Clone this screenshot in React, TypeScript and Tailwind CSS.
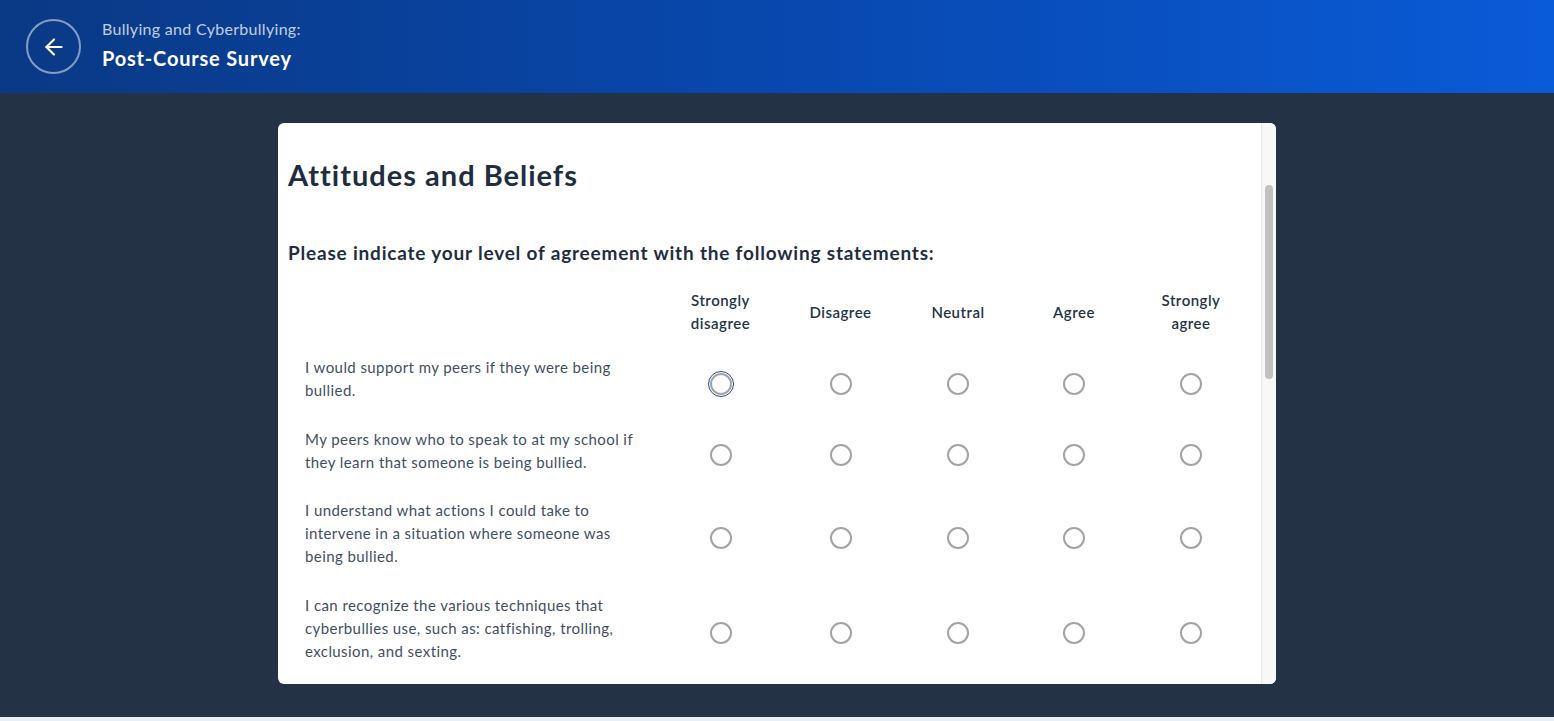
import { useState } from 'react';

const options = ['Strongly disagree', 'Disagree', 'Neutral', 'Agree', 'Strongly agree'];

const statements = [
  ['I would support my peers if they were being', 'bullied.'],
  ['My peers know who to speak to at my school if', 'they learn that someone is being bullied.'],
  ['I understand what actions I could take to', 'intervene in a situation where someone was', 'being bullied.'],
  ['I can recognize the various techniques that', 'cyberbullies use, such as: catfishing, trolling,', 'exclusion, and sexting.'],
];

function HeaderLabel({ label }: { label: string }) {
  const parts = label.startsWith('Strongly') ? ['Strongly', label.split(' ')[1]] : [label];
  return (
    <div className="flex flex-col items-center justify-center text-[15px] font-semibold leading-[23px] tracking-[0.5px] text-[#243447]">
      {parts.map((p) => (
        <span key={p}>{p}</span>
      ))}
    </div>
  );
}

export default function App() {
  const [answers, setAnswers] = useState<Record<number, number>>({});

  return (
    <div className="min-h-screen bg-[#e9eff6] font-['Lato','Noto_Sans',sans-serif]">
      <div className="flex h-[717px] flex-col bg-[#233244]">
        {/* Top bar */}
        <header className="flex h-[93px] shrink-0 items-center bg-gradient-to-r from-[#0a3985] via-[#0848ae] to-[#0a5bd8] pl-[26px]">
          <button className="flex h-[55px] w-[55px] items-center justify-center rounded-full border-2 border-white/50 text-white">
            <svg width="26" height="26" viewBox="0 0 24 24" fill="none" stroke="currentColor" strokeWidth="2" strokeLinecap="round" strokeLinejoin="round">
              <path d="M19 12H5" />
              <path d="M12 19l-7-7 7-7" />
            </svg>
          </button>
          <div className="ml-[21px] mb-[6px] flex flex-col">
            <span className="text-[16px] leading-[24px] tracking-[0.3px] text-white/75">Bullying and Cyberbullying:</span>
            <span className="mt-[4px] text-[20px] font-bold leading-[26px] tracking-[0.8px] text-white">Post-Course Survey</span>
          </div>
        </header>

        {/* Survey card */}
        <main className="flex flex-1 justify-center pt-[30px]">
          <div className="flex h-[561px] w-[998px] overflow-hidden rounded-[6px] bg-white">
            <div className="flex-1 pl-[10px]">
              <h1 className="mt-[34px] text-[29px] font-bold leading-[36px] tracking-[1px] text-[#1f2e3f]">Attitudes and Beliefs</h1>
              <h2 className="mt-[47px] text-[19px] font-bold leading-[26px] tracking-[0.8px] text-[#1f2e3f]">
                Please indicate your level of agreement with the following statements:
              </h2>

              <div className="mt-[23px] grid grid-cols-[372px_121px_119px_116px_116px_118px]">
                <div className="h-[46px]" />
                {options.map((o) => (
                  <HeaderLabel key={o} label={o} />
                ))}

                {statements.map((lines, r) => (
                  <div key={r} className="contents">
                    <div className={`pl-[17px] text-[15px] leading-[23px] tracking-[0.42px] text-[#3f4f63] ${r === 0 ? 'pt-[21px]' : 'pt-[25.5px]'}`}>
                      {lines.map((l) => (
                        <div key={l} className="whitespace-nowrap">{l}</div>
                      ))}
                    </div>
                    {options.map((o, c) => {
                      const checked = answers[r] === c;
                      const focused = r === 0 && c === 0;
                      return (
                        <div key={o} className={`flex items-center justify-center ${r === 0 ? 'pt-[30px]' : 'pt-[34.5px]'}`}>
                          <button
                            onClick={() => setAnswers({ ...answers, [r]: c })}
                            className={`flex h-[22px] w-[22px] items-center justify-center rounded-full border-2 border-[#a3a3a3] ${
                              focused ? 'outline outline-1 outline-offset-[1px] outline-[#1d4fa3]' : ''
                            }`}
                          >
                            {checked && <span className="h-[10px] w-[10px] rounded-full bg-[#1d4fa3]" />}
                          </button>
                        </div>
                      );
                    })}
                  </div>
                ))}
              </div>
            </div>

            {/* Scrollbar */}
            <div className="w-[15px] shrink-0 border-l border-[#e6e6e6] bg-[#f8f8f8] pt-[62px] pl-[3px]">
              <div className="h-[194px] w-[8px] rounded-full bg-[#c1c1c1]" />
            </div>
          </div>
        </main>
      </div>
    </div>
  );
}
